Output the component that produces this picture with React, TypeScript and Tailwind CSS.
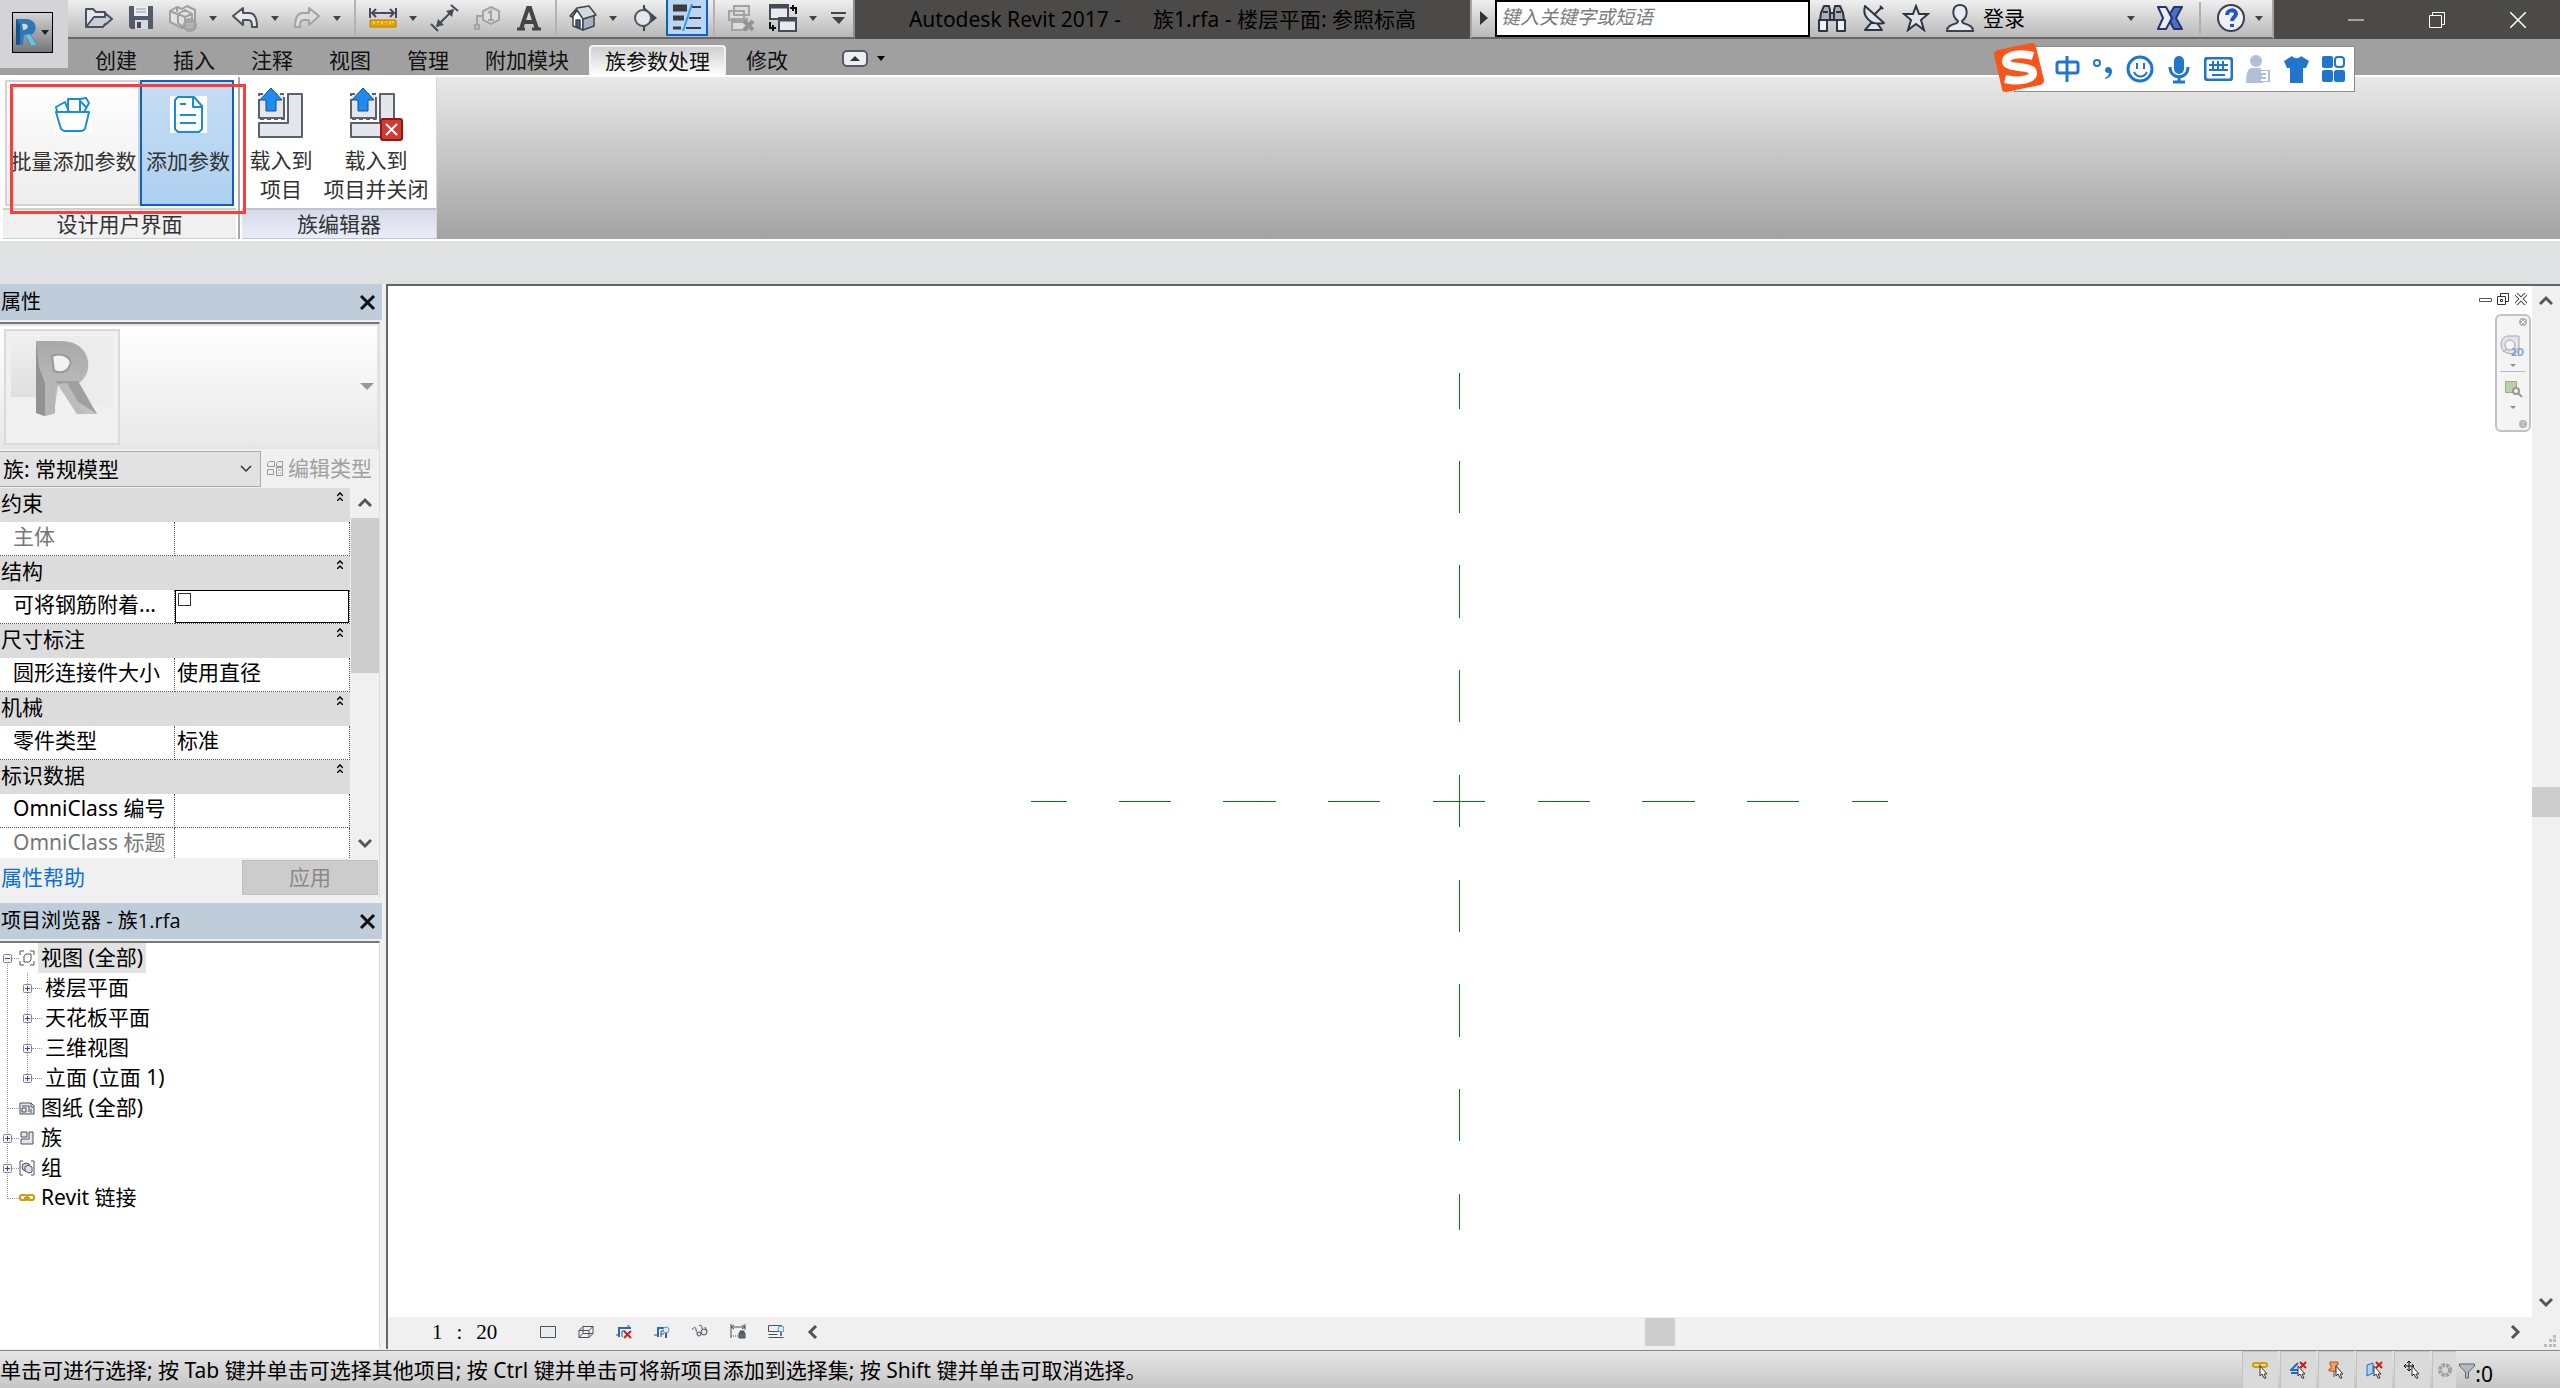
import React from 'react';

const Caret: React.FC<{ className?: string }> = ({ className = 'text-[#444]' }) => (
  <svg width="8" height="5" viewBox="0 0 8 5" className={className} fill="currentColor">
    <path d="M0 0h8L4 5z" />
  </svg>
);

const ToolButton: React.FC<{ label: string; active?: boolean; children: React.ReactNode }> = ({ label, active, children }) => (
  <button
    aria-label={label}
    className={`flex h-9 w-[42px] flex-none items-center justify-center ${active ? 'border-2 border-t-0 border-[#0a62c4] bg-[#b9d7f5]' : ''}`}
  >
    {children}
  </button>
);

const CaretButton: React.FC<{ label: string }> = ({ label }) => (
  <button aria-label={label} className="mr-[2px] flex h-9 w-[18px] flex-none items-center justify-center">
    <Caret />
  </button>
);

const ArrowShape = ({ color, fill }: { color: string; fill: string }) => (
  <svg width="28" height="24" viewBox="0 0 28 24" fill={fill} stroke={color} strokeWidth="2" strokeLinejoin="round">
    <path d="M2 10 12 2v5h6c6 0 8 5 8 14h-5c0-6-1-7-4-7h-5v5z" />
  </svg>
);

const AppMenu = () => (
  <button aria-label="应用程序菜单" className="absolute top-0 left-0 flex size-[68px] items-center justify-center bg-[#d3d4d8]">
    <span className="mt-[-3px] ml-[-3px] flex size-[41px] items-center justify-center gap-[3px] border border-black bg-linear-to-b from-[#d4d4d4] to-[#777]">
      <svg width="22" height="27" viewBox="0 0 22 27">
        <path d="M0 0h9c13 0 13 13 6 16l7 10h-8L8 15l-1 11H0z" fill="#2f77b6" />
        <path d="M0 0l4 6v19l-4 1z" fill="#16518c" />
        <path d="M6 5c7-2 8 6 1 6z" fill="#d0d5da" />
        <path d="M9 16l5-1 7 11h-6z" fill="#6cc0dd" />
      </svg>
      <Caret className="text-[#222]" />
    </span>
  </button>
);

const QuickAccess = () => (
  <div className="ml-[68px] flex h-[39px] w-[787px] flex-none items-start border-r-2 border-b-2 border-r-[#8f8f8f] border-b-[#666] bg-linear-to-b from-[#efefef] to-[#b9b9b9] pl-[10px]">
    <ToolButton label="打开">
      <svg width="30" height="22" viewBox="0 0 30 22" fill="#e3e6ec" stroke="#4a515d" strokeWidth="2" strokeLinejoin="round">
        <path d="M2 20V2h7l3 3h9v5" />
        <path d="M2 20 10 10h11V6l7 6-7 6v-1l-2 3z" fill="#c9ced8" />
      </svg>
    </ToolButton>
    <ToolButton label="保存">
      <svg width="26" height="26" viewBox="0 0 26 26">
        <path d="M1 1h24v23H3l-2-2z" fill="#535a68" />
        <path d="M6 1h14v10H6z" fill="#eceef2" />
        <path d="M8 4h10M8 7h10" stroke="#8b93a0" />
        <path d="M7 15h13v9H7z" fill="#d5d8df" />
        <path d="M9 17h4v6H9z" fill="#444b58" />
      </svg>
    </ToolButton>
    <ToolButton label="同步">
      <svg width="30" height="28" viewBox="0 0 30 28" fill="#e2e2e2" stroke="#a0a0a0" strokeWidth="2" strokeLinejoin="round">
        <path d="M2 7 9 3l5 2 5-3 8 4v12l-8 4-5 2-12-6z" />
        <path d="M10 10l7-4 7 4v9l-7 5-7-5zM10 10l7 3 7-3M17 13v11M2 7l7 3M9 3v5" />
        <circle cx="22" cy="21" r="6" fill="#a5a5a5" />
        <path d="M18 20h8M18 23h7" stroke="#c8c8c8" strokeWidth="1" />
      </svg>
    </ToolButton>
    <CaretButton label="同步选项" />
    <ToolButton label="放弃"><ArrowShape color="#4a515d" fill="#e6e9ee" /></ToolButton>
    <CaretButton label="放弃列表" />
    <ToolButton label="重做">
      <span className="-scale-x-100"><ArrowShape color="#a3a3a3" fill="#dcdcdc" /></span>
    </ToolButton>
    <CaretButton label="重做列表" />
    <span className="mx-[6px] h-9 w-[2px] bg-[#b3b3b3]" />
    <ToolButton label="测量">
      <svg width="28" height="20" viewBox="0 0 28 20">
        <path d="M1 0v10M27 0v10M3 5h22M7 1 3 5l4 4M21 1l4 4-4 4" fill="none" stroke="#454b57" strokeWidth="2" />
        <path d="M1 12h26v7H1z" fill="#e9a400" stroke="#b87d00" />
        <path d="M5 13v3M9 13v2M13 13v3M17 13v2M21 13v3M24 13v2" stroke="#fff0a8" />
      </svg>
    </ToolButton>
    <CaretButton label="测量选项" />
    <ToolButton label="对齐尺寸标注">
      <svg width="30" height="28" viewBox="0 0 30 28" fill="none" stroke="#454b57" strokeWidth="2">
        <path d="M1 20l7 7M21 1l7 6M7 22 23 6" />
        <path d="M6 23l2-8 6 6zM24 5l-8 2 6 6z" fill="#454b57" stroke="none" />
      </svg>
    </ToolButton>
    <ToolButton label="标记">
      <svg width="28" height="26" viewBox="0 0 28 26" fill="none" stroke="#a3a3a3" strokeWidth="2">
        <path d="M4 20v-9h5M2 20h4v4H2z" />
        <path d="M18 2l8 4v9l-8 4-8-4V6z" fill="#dedede" />
        <path d="M15 8l3-2v9M15 15h6" />
      </svg>
    </ToolButton>
    <ToolButton label="文字">
      <svg width="24" height="26" viewBox="0 0 24 26" fill="none" stroke="#444" strokeWidth="4">
        <path d="M4 24 11 3h2l7 21M7 17h10" />
        <path d="M0 24h8M15 24h9" strokeWidth="3" />
      </svg>
    </ToolButton>
    <span className="mx-[5px] h-9 w-[2px] bg-[#b3b3b3]" />
    <ToolButton label="三维视图">
      <svg width="28" height="26" viewBox="0 0 28 26" stroke="#3e4450" strokeWidth="1.5" strokeLinejoin="round">
        <path d="M4 11v10l10 4V12L8 5z" fill="#fafafa" />
        <path d="M14 14v11l11-4V10z" fill="#aab2bf" />
        <path d="M1 11 8 3l12-2 7 9-13 4-6-9-5 7z" fill="#d5dae1" />
        <path d="M7 15h4v8l-4-1z" fill="#555d6a" />
      </svg>
    </ToolButton>
    <CaretButton label="三维视图选项" />
    <ToolButton label="剖面">
      <svg width="26" height="26" viewBox="0 0 26 26">
        <path d="M12 0v26" stroke="#3e4450" strokeWidth="2" />
        <path d="M12 2 25 13 12 23z" fill="#3e4450" />
        <circle cx="11" cy="13" r="8" fill="#e4e7ec" stroke="#4f5663" strokeWidth="2" />
      </svg>
    </ToolButton>
    <ToolButton label="细线" active>
      <svg width="30" height="28" viewBox="0 0 30 28" stroke="#3c3c3c">
        <path d="M1 5h14" strokeWidth="7" />
        <path d="M1 15h11" strokeWidth="5" />
        <path d="M1 25h8" strokeWidth="3" />
        <path d="M20 4h9M17 15h12M14 25h15" strokeWidth="2" />
        <path d="M20 1 11 28" stroke="#3598fb" strokeWidth="2" />
      </svg>
    </ToolButton>
    <span className="mx-[5px] h-9 w-[2px] bg-[#b3b3b3]" />
    <ToolButton label="关闭隐藏窗口">
      <svg width="28" height="28" viewBox="0 0 28 28" fill="#dcdcdc" stroke="#a3a3a3" strokeWidth="2">
        <path d="M7 2h15v9H7zM2 7h15v9H2zM5 15h15v11H5zM5 18h12" />
        <path d="M17 17l9 9M26 17l-9 9" stroke="#939393" strokeWidth="4" />
      </svg>
    </ToolButton>
    <ToolButton label="切换窗口">
      <svg width="30" height="28" viewBox="0 0 30 28" fill="#e8eaf0" stroke="#444b57" strokeWidth="2">
        <path d="M2 1h18v14H2z" />
        <path d="M11 14h17v13H11z" />
        <path d="M2 3h18M11 16h17" strokeWidth="3" />
        <path d="M22 4h6v6M25 1v6M2 18v6h6M5 21v6" fill="none" stroke="#111" />
      </svg>
    </ToolButton>
    <CaretButton label="窗口列表" />
    <button aria-label="自定义快速访问工具栏" className="flex h-9 w-7 items-center justify-center">
      <svg width="15" height="12" viewBox="0 0 15 12" fill="#444">
        <path d="M0 0h15v2H0zM1 5h13l-6 7z" />
      </svg>
    </button>
  </div>
);

const InfoCenter = () => (
  <div className="flex h-[39px] w-[804px] flex-none items-start border-x-2 border-b-2 border-x-[#a5a5a5] border-b-[#666] bg-linear-to-b from-[#efefef] to-[#b9b9b9]">
    <button aria-label="展开" className="flex h-9 w-[23px] items-center justify-center">
      <svg width="8" height="14" viewBox="0 0 8 14" fill="#333"><path d="M0 0v14l8-7z" /></svg>
    </button>
    <input
      aria-label="搜索"
      placeholder="键入关键字或短语"
      className="h-[37px] w-[315px] border-2 border-black bg-white px-1 pb-1 text-[19px] italic placeholder:text-[#7d7d7d]"
    />
    <div className="flex h-9 items-center gap-[15px] pl-2">
      <button aria-label="查找">
        <svg width="28" height="27" viewBox="0 0 28 27" fill="#eef0f4" stroke="#2e3440" strokeWidth="2" strokeLinejoin="round">
          <path d="M12 8h4v7h-4zM3 8 6 1h5l1 4v10H2zM16 5l1-4h5l3 7 1 7H16z" fill="#a9b0bd" />
          <path d="M1 15h8v11H1zM19 15h8v11h-8z" />
          <path d="M5 7h5M18 7h5" />
        </svg>
      </button>
      <button aria-label="通讯中心">
        <svg width="26" height="28" viewBox="0 0 26 28" fill="#dfe3ea" stroke="#2e3440" strokeWidth="2" strokeLinejoin="round">
          <path d="M10 19 4 26h17l-5-7z" />
          <path d="M4 2C1 12 9 22 23 19z" />
          <path d="M13 11 21 3M19 2l3 3" />
        </svg>
      </button>
      <button aria-label="收藏夹">
        <svg width="28" height="28" viewBox="0 0 28 28" fill="#dfe3ea" stroke="#2e3440" strokeWidth="2">
          <path d="M14 2l3 8h9l-7 6 3 10-8-6-8 6 3-10-7-6h9z" />
        </svg>
      </button>
      <button className="flex items-center gap-2 text-[21px] leading-7 text-black">
        <svg width="30" height="28" viewBox="0 0 30 28" fill="#e8ebf0" stroke="#3a414e" strokeWidth="2">
          <path d="M2 27c0-5 4-6 10-8l1-2C6 12 7 1 15 1s9 11 2 16l1 2c6 2 10 3 10 8z" />
        </svg>
        登录
      </button>
    </div>
    <div className="ml-auto flex h-9 items-center">
      <button aria-label="登录选项" className="px-[22px]"><Caret /></button>
      <button aria-label="应用商店">
        <svg width="26" height="24" viewBox="0 0 26 24" strokeWidth="2" stroke="#26356f" strokeLinejoin="round">
          <path d="M1 1h8l6 11-6 11H1l5-11z" fill="#e8edf8" />
          <path d="M25 1h-8l-4 7 2 4-2 4 4 7h8l-6-11z" fill="#4c6fc4" />
        </svg>
      </button>
      <span className="mx-4 h-8 w-[2px] bg-[#b0b0b0]" />
      <button aria-label="帮助">
        <svg width="29" height="29" viewBox="0 0 29 29">
          <circle cx="14" cy="14" r="13" fill="#eef1f6" stroke="#3a414e" strokeWidth="2" />
          <path d="M10 11c0-6 9-6 9-1 0 3-4 3-4 7" fill="none" stroke="#2457c5" strokeWidth="4" />
          <path d="M13 20h4v3h-4z" fill="#2457c5" />
        </svg>
      </button>
      <button aria-label="帮助选项" className="px-[9px]"><Caret /></button>
    </div>
  </div>
);

const TitleBar = () => (
  <div className="flex h-[39px] flex-none bg-[#4b4a48]">
    <QuickAccess />
    <div className="flex flex-1 items-center justify-center gap-8 pb-px text-[21px] whitespace-nowrap text-black">
      <span>Autodesk Revit 2017 -</span>
      <span>族1.rfa - 楼层平面: 参照标高</span>
    </div>
    <InfoCenter />
    <div className="flex w-[286px] flex-none items-center justify-between pr-[34px] pl-[74px]">
      <button aria-label="最小化">
        <svg width="16" height="16" viewBox="0 0 16 16"><path d="M0 8h16" stroke="#fff" /></svg>
      </button>
      <button aria-label="还原">
        <svg width="16" height="16" viewBox="0 0 16 16" fill="none" stroke="#fff">
          <path d="M.5 3.500h12v12H.5zM3.500 3V.5h12v12H13" />
        </svg>
      </button>
      <button aria-label="关闭">
        <svg width="16" height="16" viewBox="0 0 16 16" stroke="#fff" strokeWidth="1.500"><path d="M0 0l16 16M16 0 0 16" /></svg>
      </button>
    </div>
  </div>
);

const tabs = ['创建', '插入', '注释', '视图', '管理', '附加模块', '族参数处理', '修改'];

const TabRow = () => (
  <nav className="flex h-9 flex-none items-end bg-[#a0a0a0] pl-[77px] text-[21px] text-[#111]">
    {tabs.map((t) =>
      t === '族参数处理' ? (
        <button key={t} className="mx-[2px] h-[30px] rounded-t border-2 border-b-0 border-[#f2f2f2] bg-linear-to-b from-[#cfcfcf] to-white px-[14px] leading-[26px]">
          {t}
        </button>
      ) : (
        <button key={t} className="h-[30px] px-[18px] leading-[28px]">{t}</button>
      )
    )}
    <button aria-label="最小化功能区" className="mb-[8px] ml-9 flex items-center gap-[9px]">
      <svg width="26" height="17" viewBox="0 0 26 17">
        <rect x="1" y="1" width="24" height="15" rx="4" fill="#eceef2" stroke="#535a68" strokeWidth="2" />
        <path d="M8 11h10l-5-5z" fill="#333" />
      </svg>
      <Caret className="text-black" />
    </button>
  </nav>
);

const FamilyIcon: React.FC<{ closing?: boolean }> = ({ closing }) => (
  <svg width={closing ? 54 : 48} height="54" viewBox={closing ? '0 0 54 54' : '0 0 48 54'} strokeLinejoin="round">
    <g fill="#e4e6eb" stroke="#5c626d" strokeWidth="2">
      <path d="M2 7h25v25H2z" strokeDasharray="4 3" />
      <path d="M2 12v19h25V12" />
      <path d={closing ? 'M31 7h14v28H31z' : 'M31 7h14v43H2V36h29z'} />
      {closing && <path d="M2 36h34v14H2z" />}
    </g>
    <path d="M14 1 25 13h-6v11H9V13H3z" fill="#1f8bf0" stroke="#0c4f9d" />
    {closing && (
      <g>
        <rect x="32" y="32" width="21" height="21" rx="2" fill="#d23a34" stroke="#98140f" strokeWidth="2" />
        <path d="M37 37l11 11M48 37 37 48" stroke="#fff" strokeWidth="2" />
      </g>
    )}
  </svg>
);

const Ribbon = () => (
  <div className="relative flex h-[166px] flex-none border-y-2 border-white bg-linear-to-b from-[#e9e9e9] to-[#a3a3a3] text-[21px] leading-[29px] text-[#333]">
    <section className="flex w-[240px] flex-none flex-col border-r-2 border-[#a8a8a8] bg-white pt-[3px]">
      <div className="flex h-[126px] pl-[5px]">
        <button className="flex w-[135px] flex-col items-center border-2 border-[#d3d3d3] bg-linear-to-b from-white to-[#ededed] pt-[14px] pl-[2px] whitespace-nowrap">
          <svg width="37" height="37" viewBox="0 0 37 37" fill="#fff" stroke="#168fd8" strokeWidth="2" strokeLinejoin="round">
            <path d="M0 0h37v37H0z" stroke="none" />
            <path d="M2 15 1 11l9-5 4 10M13 16V3h12v13M25 3l6-1 3 5-5 9M25 5l6 6" />
            <path d="M1 16h33l-4 17-3 2H9l-3-2z" />
          </svg>
          <span className="mt-[14px]">批量添加参数</span>
        </button>
        <button className="flex w-[94px] flex-col items-center border-2 border-[#0a62c4] bg-linear-to-b from-[#c6def5] to-[#aed0f0] pt-[14px] pl-[2px] whitespace-nowrap">
          <svg width="37" height="37" viewBox="0 0 37 37" fill="none" stroke="#168fd8" strokeWidth="2" strokeLinejoin="round">
            <path d="M0 0h37v37H0z" fill="#fff" stroke="none" />
            <path d="M8 1h16l8 9v23l-3 3H8l-3-3V4zM23 1v10h9M10 8h6M10 19h16M10 27h16" />
          </svg>
          <span className="mt-[14px]">添加参数</span>
        </button>
      </div>
      <h2 className="mt-[2px] mr-[2px] ml-[3px] h-[31px] border-t-2 border-b border-[#cfcfcf] bg-[#f0f0f0] text-center leading-7">设计用户界面</h2>
    </section>
    <section className="flex w-[197px] flex-none flex-col border-r border-[#d8d8d8] bg-white pt-[3px]">
      <div className="flex h-[126px] pt-[7px]">
        <button className="flex w-[82px] flex-col items-center">
          <FamilyIcon />
          <span className="mt-[5px]">载入到<br />项目</span>
        </button>
        <button className="flex w-[108px] flex-col items-center">
          <FamilyIcon closing />
          <span className="mt-[5px] whitespace-nowrap">载入到<br />项目并关闭</span>
        </button>
      </div>
      <h2 className="mt-[2px] ml-[2px] h-[31px] border-t-2 border-b border-[#bfc4d4] bg-linear-to-b from-[#d6dae8] to-[#eaedf9] text-center leading-7">族编辑器</h2>
    </section>
    {/* highlight around the add-in buttons */}
    <div className="pointer-events-none absolute top-[7px] left-[10px] h-[130px] w-[236px] border-3 border-[#ff3b3b]" />
  </div>
);

// floating input method bar
const ImeBar = () => (
  <div className="absolute top-[43px] left-[1993px] flex h-[51px] items-center">
    <div className="mt-px ml-[21px] flex h-[46px] w-[341px] items-center justify-between border border-[#8b8b8b] bg-white pr-[9px] pl-10 text-[#1f76cc]">
      <svg width="25" height="26" viewBox="0 0 25 26" fill="none" stroke="currentColor" strokeWidth="3">
        <rect x="2" y="6" width="21" height="11" rx="2" /><path d="M12 0v26" />
      </svg>
      <svg width="20" height="20" viewBox="0 0 20 20" fill="currentColor">
        <circle cx="4" cy="4" r="3" fill="none" stroke="currentColor" strokeWidth="2" />
        <path d="M12 19c3-2 4-3 4-5-3 0-4-1-4-3 0-4 7-4 7 1 0 4-2 6-6 8z" />
      </svg>
      <svg width="29" height="29" viewBox="0 0 29 29" fill="none" stroke="currentColor" strokeWidth="3">
        <circle cx="14" cy="14" r="12" /><path d="M11 8v6M18 8v6M8 17c3 6 10 6 13 0" strokeWidth="2" />
      </svg>
      <svg width="22" height="29" viewBox="0 0 22 29" fill="none" stroke="currentColor" strokeWidth="3">
        <rect x="6" y="1" width="10" height="18" rx="5" fill="currentColor" stroke="none" />
        <path d="M2 12c0 13 18 13 18 0M11 21v6M5 27h12" />
      </svg>
      <svg width="29" height="24" viewBox="0 0 29 24" fill="none" stroke="currentColor" strokeWidth="2">
        <rect x="1" y="1" width="27" height="22" rx="3" strokeWidth="3" />
        <path d="M5 8h19M5 13h19M8 18h13M9 4v9M14 4v9M19 4v9" />
      </svg>
      <svg width="25" height="28" viewBox="0 0 25 28" fill="#b3bfd8">
        <circle cx="10" cy="6" r="6" /><path d="M0 28c0-10 2-15 6-15h8l3 3v12z" />
        <path d="M13 15h11v12H13z" /><path d="M15 17h6v8h-6M16 21h5" fill="none" stroke="#fff" strokeWidth="2" />
      </svg>
      <svg width="25" height="27" viewBox="0 0 25 27" fill="currentColor">
        <path d="M8 0c2 3 7 3 9 0l8 5-3 7h-3v15H6V12H3L0 5z" />
      </svg>
      <svg width="23" height="26" viewBox="0 0 23 26" fill="currentColor">
        <rect width="11" height="12" rx="2" /><rect y="14" width="11" height="12" rx="2" /><rect x="12" y="14" width="11" height="12" rx="2" />
        <rect x="13" y="1" width="9" height="10" rx="3" fill="none" stroke="currentColor" strokeWidth="2" />
      </svg>
    </div>
    <svg width="52" height="50" viewBox="0 0 52 50" className="absolute top-0 left-0">
      <path d="M5 7 38 0c3 0 4 1 5 4l8 33c0 3-1 4-4 5l-34 7c-3 0-4-1-4-3L1 12c0-3 1-4 4-5z" fill="#f9551b" />
      <path d="M40 13c-13-4-28-1-27 6 1 7 27 3 27 11 0 7-15 9-28 6" fill="none" stroke="#fff" strokeWidth="8" />
    </svg>
  </div>
);

const PanelHeader: React.FC<{ title: string }> = ({ title }) => (
  <header className="flex h-9 flex-none items-center justify-between bg-[#bfccda] pr-[6px] pl-[1px] text-black">
    <h2 className="font-['Open_Sans','Noto_Sans_CJK_SC',sans-serif] text-[20px]">{title}</h2>
    <button aria-label="关闭面板">
      <svg width="16" height="15" viewBox="0 0 16 15" stroke="#111" strokeWidth="3"><path d="M1 1l13 13M14 1 1 14" /></svg>
    </button>
  </header>
);

type Row = { name: string; value?: string; muted?: boolean; check?: boolean };

const groups: { title: string; rows: Row[] }[] = [
  { title: '约束', rows: [{ name: '主体', muted: true }] },
  { title: '结构', rows: [{ name: '可将钢筋附着...', check: true }] },
  { title: '尺寸标注', rows: [{ name: '圆形连接件大小', value: '使用直径' }] },
  { title: '机械', rows: [{ name: '零件类型', value: '标准' }] },
  { title: '标识数据', rows: [{ name: 'OmniClass 编号' }, { name: 'OmniClass 标题', muted: true }] },
];

const Chevron: React.FC<{ d: string }> = ({ d }) => (
  <svg width="14" height="14" viewBox="0 0 14 14" fill="none" stroke="#555" strokeWidth="3"><path d={d} /></svg>
);
const UP = 'M1 10l6-6 6 6';
const DOWN = 'M1 4l6 6 6-6';
const LEFT = 'M10 1 4 7l6 6';
const RIGHT = 'M4 1l6 6-6 6';

const PropertyGrid = () => (
  <div className="flex h-[370px] flex-none overflow-hidden">
    <div className="w-[351px] flex-none overflow-hidden">
      <table className="w-[350px] table-fixed border-separate border-spacing-0 whitespace-nowrap text-black">
        <colgroup><col className="w-[175px]" /><col /></colgroup>
        {groups.map((g) => (
          <tbody key={g.title}>
            <tr className="h-[34px] bg-[#dcdcdc]">
              <th colSpan={2} className="p-0 text-left font-normal">
                <div className="flex h-[34px] items-start justify-between pr-[7px] pl-[1px]">
                  <span className="leading-[30px]">{g.title}</span>
                  <svg width="6" height="9" viewBox="0 0 6 9" className="mt-1" fill="none" stroke="#000" strokeWidth="1.500"><path d="M0 4l3-3 3 3M0 9l3-3 3 3" /></svg>
                </div>
              </th>
            </tr>
            {g.rows.map((r) => (
              <tr key={r.name} className="h-[34px] bg-white align-top">
                <td className={`border-r border-b border-dotted border-[#555] p-0 pl-[13px] leading-7 ${r.muted ? 'text-[#777]' : ''}`}>
                  {r.name}
                </td>
                <td className="border-r border-b border-dotted border-[#555] p-0 leading-7">
                  {r.check ? (
                    <div className="h-[33px] border border-black p-[2px]">
                      <input type="checkbox" aria-label={r.name} className="block size-[13px] appearance-none border border-[#333] bg-white" />
                    </div>
                  ) : (
                    <span className="pl-[2px]">{r.value}</span>
                  )}
                </td>
              </tr>
            ))}
          </tbody>
        ))}
      </table>
    </div>
    <div className="flex w-7 flex-col items-center bg-[#f0f0f0]">
      <div className="flex h-[30px] items-center"><Chevron d={UP} /></div>
      <div className="h-[155px] w-full bg-[#cdcdcd]" />
      <div className="mt-auto flex h-[30px] items-center"><Chevron d={DOWN} /></div>
    </div>
  </div>
);

const Properties = () => (
  <section>
    <PanelHeader title="属性" />
    <div className="mt-[2px] mr-[2px] border-t-2 border-r border-t-[#777] border-r-[#ddd] pb-[2px]">
      <button aria-label="类型选择器" className="mb-px flex h-[125px] w-[379px] items-center justify-between border-2 border-l-0 border-[#e4e4e4] bg-linear-to-b from-white to-[#e8e8e8] pr-[3px] pl-1">
        <svg width="116" height="116" viewBox="0 0 116 116">
          <defs>
            <linearGradient id="thumb" x1="0" y1="0" x2="0" y2="1"><stop offset="0" stopColor="#a9a9a9" /><stop offset="1" stopColor="#c4c4c4" /></linearGradient>
            <linearGradient id="wall" x1="0" y1="0" x2="0" y2="1"><stop offset="0" stopColor="#f0f0f0" /><stop offset="1" stopColor="#dfdfdf" /></linearGradient>
          </defs>
          <path d="M1 1h114v114H1z" fill="#f0f0f0" stroke="#dadada" strokeWidth="2" />
          <path d="M7 7h30v61H7z" fill="url(#wall)" />
          <path d="M37 7h72v73L60 66l-23 2z" fill="#ececec" />
          <path d="M32 12h25c32 0 34 35 16 43l20 30H73L54 56l-4 29-10 2-8-3z" fill="url(#thumb)" />
          <path d="M32 13v71l9 3V54L35 38z" fill="#929292" />
          <path d="M41 54l10-3v33l-10 3z" fill="#b6b6b6" />
          <path d="M51 52h23l19 33-20-13z" fill="#a0a0a0" />
          <path d="M54 55l9-1 18 31H73z" fill="#bcbcbc" />
          <path d="M48 27c14-5 22 5 17 11-3 6-10 6-15 4z" fill="#f2f2f2" stroke="#999" strokeWidth="2" />
        </svg>
        <svg width="14" height="7" viewBox="0 0 14 7" fill="#999"><path d="M0 0h14L7 7z" /></svg>
      </button>
      <div className="flex h-[38px] items-center">
        <div className="relative flex-none">
          <select aria-label="族类型" className="block h-9 w-[261px] appearance-none border border-l-0 border-[#aaa] bg-[#e2e2e2] pl-[3px] text-black">
            <option>族: 常规模型</option>
          </select>
          <svg width="12" height="8" viewBox="0 0 12 8" className="pointer-events-none absolute top-[14px] right-[9px]" fill="none" stroke="#333" strokeWidth="1.500"><path d="M1 1l5 5 5-5" /></svg>
        </div>
        <button className="ml-[6px] flex items-center gap-[4px] pb-[2px] whitespace-nowrap text-[#a0a0a0]">
          <svg width="17" height="17" viewBox="0 0 17 17" fill="none" stroke="#999">
            <path d="M.5 3.500l2-2h5v5h-7zM9.500 3.500l2-2h4v5h-6zM.5 9.500h6v5h-6z" />
            <path d="M9.500 7.500h6v8h-6zM11 10h3M11 13h1M13 13h1" />
          </svg>
          编辑类型
        </button>
      </div>
      <PropertyGrid />
      <div className="flex h-[38px] items-center justify-between pr-px pl-[1px]">
        <a href="#help" className="text-[#0a6fd8]">属性帮助</a>
        <button disabled className="h-[35px] w-[136px] border border-[#bfbfbf] bg-[#cccccc] text-[#888]">应用</button>
      </div>
    </div>
  </section>
);

const Expander: React.FC<{ open?: boolean }> = ({ open }) => (
  <svg width="9" height="9" viewBox="0 0 9 9" className="relative flex-none">
    <rect x=".5" y=".5" width="8" height="8" rx="1" fill="#f4f4f4" stroke="#858585" />
    <path d={open ? 'M2 4.500h5' : 'M2 4.500h5M4.500 2v5'} stroke="#2d4a9e" />
  </svg>
);

const Icon16: React.FC<{ children: React.ReactNode }> = ({ children }) => (
  <svg width="16" height="16" viewBox="0 0 16 16" className="flex-none" fill="none" stroke="#4a515d">{children}</svg>
);

const topItem = 'relative flex h-[30px] items-center';
const dots = 'h-px border-t border-dotted border-[#999]';

const Branch: React.FC<{ mark?: React.ReactNode; icon: React.ReactNode; label: string; selected?: boolean }> = ({ mark, icon, label, selected }) => (
  <div className={topItem}>
    <span className="flex w-4 flex-none items-center">
      {mark ? <>{mark}<span className={`${dots} flex-1`} /></> : <span className={`${dots} ml-1 flex-1`} />}
    </span>
    {icon}
    <span className={`ml-[3px] h-[30px] px-[3px] leading-7 ${selected ? 'bg-[#e2e2e2]' : ''}`}>{label}</span>
  </div>
);

const ProjectBrowser = () => (
  <section className="flex min-h-0 flex-1 flex-col">
    <PanelHeader title="项目浏览器 - 族1.rfa" />
    <div className="mt-[2px] mr-[2px] flex-1 border-t-2 border-r border-t-[#777] border-r-[#ddd] bg-white">
      <div className="relative pl-[3px] whitespace-nowrap text-black">
        <span className="absolute top-4 left-[7px] h-[240px] border-l border-dotted border-[#999]" />
        <Branch
          selected
          label="视图 (全部)"
          mark={<Expander open />}
          icon={<Icon16><path d="M1 5V1h4M11 1h4v4M15 11v4h-4M5 15H1v-4M5 6l2-2h5v6l-2 2H5z" /></Icon16>}
        />
        <div className="relative pl-5">
          <span className="absolute top-0 left-6 h-[105px] border-l border-dotted border-[#999]" />
          {['楼层平面', '天花板平面', '三维视图', '立面 (立面 1)'].map((v) => (
            <div key={v} className={topItem}>
              <Expander />
              <span className={`${dots} w-[10px]`} />
              <span className="h-[30px] pl-[3px] leading-7">{v}</span>
            </div>
          ))}
        </div>
        <Branch label="图纸 (全部)" icon={<Icon16><path d="M1 3h11l3 3v8H1zM12 3v4h3" fill="#e4e6ea" /><path d="M3 6h7v6M3 8h4v4H3zM12 9v4" /></Icon16>} />
        <Branch label="族" mark={<Expander />} icon={<Icon16><path d="M2 2h6v5H2zM10 2h4v12H2V9h8z" fill="#e4e6ea" /></Icon16>} />
        <Branch label="组" mark={<Expander />} icon={<Icon16><path d="M4 1H1v14h3M12 1h3v14h-3" /><circle cx="7" cy="7" r="4" fill="#c9ced8" /><path d="M6 7l3-2 4 2v5l-3 1-4-2z" fill="#dde1e8" /></Icon16>} />
        <Branch label="Revit 链接" icon={<Icon16><g stroke="#d69a00" strokeWidth="2"><rect x="1" y="5" width="7" height="5" rx="2" /><rect x="8" y="5" width="7" height="5" rx="2" /><path d="M5 8h6" /></g></Icon16>} />
      </div>
    </div>
  </section>
);

const ReferencePlanes = () => (
  <svg width="858" height="858" viewBox="0 0 858 858" className="flex-none" stroke="#007f0e" strokeWidth="1" shapeRendering="crispEdges">
    <path d="M0 428.500h36M88 428.500h52M192 428.500h53M297 428.500h52M402 428.500h52M507 428.500h52M611 428.500h53M716 428.500h52M821 428.500h36" />
    <path d="M428.500 0v36M428.500 88v52M428.500 192v53M428.500 297v52M428.500 402v52M428.500 507v52M428.500 611v53M428.500 716v52M428.500 821v36" />
  </svg>
);

const NavigationBar = () => (
  <div className="absolute top-[28px] right-[1px] flex h-[118px] w-9 flex-col items-center rounded-md border-2 border-[#c2c2c2] bg-[#f4f4f4]">
    <button aria-label="关闭导航栏" className="mt-[2px] mr-[2px] self-end">
      <svg width="8" height="8" viewBox="0 0 8 8"><circle cx="4" cy="4" r="4" fill="#b3b3b3" /><path d="M2 2l4 4M6 2 2 6" stroke="#fff" /></svg>
    </button>
    <button aria-label="二维控制盘" className="mt-2">
      <svg width="28" height="26" viewBox="0 0 28 26" fill="#e3e3e8" stroke="#a5a5ae">
        <path d="M9 2h11v14c-3 6-18 5-18-5 0-5 3-9 7-9z" /><circle cx="11" cy="11" r="5" fill="#f4f4f4" /><path d="M4 18l4-3M14 15l3 3" />
        <text x="12" y="22" fontSize="10" fontWeight="700" fill="#7ba2cc" stroke="none">2D</text>
      </svg>
    </button>
    <svg width="6" height="3" viewBox="0 0 6 3" fill="#8d8d8d" className="mt-1"><path d="M0 0h6L3 3z" /></svg>
    <span className="mt-1 h-px w-[26px] bg-[#bbb]" />
    <button aria-label="区域放大" className="mt-2 ml-[2px]">
      <svg width="18" height="18" viewBox="0 0 18 18">
        <path d="M.5 1.500h11v11H.5z" fill="#b8d1ab" stroke="#92b083" /><circle cx="11" cy="11" r="3" fill="#f4f4f4" stroke="#999" strokeWidth="2" /><path d="M13 13l4 4" stroke="#999" strokeWidth="2" />
      </svg>
    </button>
    <svg width="6" height="3" viewBox="0 0 6 3" fill="#8d8d8d" className="mt-2"><path d="M0 0h6L3 3z" /></svg>
    <svg width="8" height="8" viewBox="0 0 8 8" className="mt-auto mr-[2px] mb-[2px] self-end"><circle cx="4" cy="4" r="3" fill="#ddd" stroke="#b3b3b3" strokeWidth="2" /><path d="M2 4h4" stroke="#999" /></svg>
  </div>
);

const viewTools: { label: string; art: React.ReactNode }[] = [
  { label: '详细程度', art: <path d="M.5 2.500h15v11H.5z" fill="#e9ebf0" /> },
  { label: '视觉样式', art: <path d="M1 6.500h10v7H1zM1 6.500l4-4h10l-4 4M15 2.500v7l-4 4M5 2.500v7h10M5 9.500l-4 4" /> },
  { label: '裁剪视图', art: <><path d="M3 13V4h12" stroke="#1c6fc4" strokeWidth="2" /><path d="M6 13V7h3M0 11h3M11 2h3" /><path d="M8 7l7 7M15 7l-7 7" stroke="#c22" strokeWidth="2" /></> },
  { label: '显示裁剪区域', art: <><path d="M4 13V4h10" stroke="#1c6fc4" strokeWidth="2" /><path d="M0 11h3M7 13V7h3M7 10h3" /><circle cx="12" cy="6" r="3" fill="#d9ebfa" stroke="#4f94d6" /><path d="M12 9v5" stroke="#555" strokeWidth="2" /></> },
  { label: '临时隐藏', art: <><path d="M0 6c2-4 4-3 4 0 0 2 2 4 3 4M7 2c2-2 3 0 3 3M13 3l2 4" /><circle cx="7" cy="10" r="2" fill="#dfe3ea" /><circle cx="12" cy="8" r="3" fill="#dfe3ea" /></> },
  { label: '锁定方向', art: <><path d="M1 0v14M15 0v6M1 3h14M4 1 1 3l3 2M12 1l3 2-3 2" /><path d="M1 12h8" strokeDasharray="1 1" /><path d="M9 9h6v5H9zM10 9V7h4v2" fill="#666" /></> },
  { label: '预览可见性', art: <><path d="M.5 1.500h13v6H.5zM.5 10.500h9M.5 13.500h15" /><circle cx="13" cy="5" r="3" fill="#d9ebfa" stroke="#4f94d6" /><path d="M13 8v4" stroke="#777" strokeWidth="2" /></> },
];

const Canvas = () => (
  <main className="flex min-w-0 flex-1 flex-col border-t-2 border-l-2 border-[#666] bg-white">
    <div className="flex min-h-0 flex-1">
      <div className="relative flex min-w-0 flex-1 items-center justify-center overflow-hidden">
        <ReferencePlanes />
        <div className="absolute top-[7px] right-[5px] flex items-center gap-[5px]">
          <svg width="13" height="12" viewBox="0 0 13 12" fill="none" stroke="#555"><path d="M.5 5.500h12v3H.5z" /></svg>
          <svg width="13" height="12" viewBox="0 0 13 12" fill="#fff" stroke="#334"><path d="M3.500.5h8v8h-8z" /><path d="M.5 3.500h8v8h-8zM3.500 6.500h2v2h-2z" /></svg>
          <svg width="12" height="12" viewBox="0 0 12 12" fill="none"><path d="M1 1l10 10M11 1 1 11" stroke="#444" strokeWidth="4" /><path d="M1 1l10 10M11 1 1 11" stroke="#fff" strokeWidth="2" /></svg>
        </div>
        <NavigationBar />
      </div>
      <div className="flex w-7 flex-none flex-col items-center justify-between bg-[#f0f0f0] py-2">
        <Chevron d={UP} />
        <div className="h-[30px] w-full bg-[#cdcdcd]" />
        <Chevron d={DOWN} />
      </div>
    </div>
    <div className="flex h-8 flex-none items-center bg-[#f0f0f0] pb-[2px] pl-[44px]">
      <button className="flex w-[108px] gap-[14px] font-['Liberation_Serif','Noto_Sans_CJK_SC',serif] text-[21px] text-black">
        <span>1</span><span>:</span><span>20</span>
      </button>
      <div className="flex gap-[22px]">
        {viewTools.map((t) => (
          <button key={t.label} aria-label={t.label}>
            <svg width="16" height="16" viewBox="0 0 16 16" fill="none" stroke="#4a515d">{t.art}</svg>
          </button>
        ))}
        <button aria-label="向左滚动"><Chevron d={LEFT} /></button>
      </div>
      <div className="flex flex-1 items-center justify-center pr-2">
        <div className="h-7 w-[30px] bg-[#cdcdcd]" />
      </div>
      <button aria-label="向右滚动" className="mr-[22px]"><Chevron d={RIGHT} /></button>
      <svg width="12" height="12" viewBox="0 0 12 12" fill="#bbb" className="mr-1 self-end"><path d="M9 0h3v3H9zM5 4h3v3H5zM9 4h3v3H9zM0 9h3v3H0zM5 9h3v3H5zM9 9h3v3H9z" /></svg>
    </div>
  </main>
);

const Cursor = () => <path d="M8 5v10l2-2 2 4h2l-2-4h3z" fill="#fff" stroke="#333" />;
const RedX = () => <path d="M10 1l6 6M16 1l-6 6" stroke="#d01818" strokeWidth="2" />;

const selectTools: { label: string; art: React.ReactNode }[] = [
  { label: '选择链接', art: <g stroke="#d69a00" strokeWidth="2"><rect x="1" y="2" width="7" height="4" rx="2" /><rect x="8" y="2" width="7" height="4" rx="2" /></g> },
  { label: '选择基线图元', art: <><path d="M8 2 1 9h9M1 12h10" stroke="#1c6fc4" strokeWidth="2" /><RedX /></> },
  { label: '选择锁定图元', art: <><path d="M2 1h8v3H8v4h3v2H1V8h2V4H2z" fill="#f3a45c" stroke="#b8501a" /><path d="M6 10v6" stroke="#555" /></> },
  { label: '按面选择图元', art: <><path d="M1 4l6-2v10l-6 3z" fill="#a9d3ef" stroke="#1c6fc4" /><RedX /></> },
  { label: '选择时拖曳图元', art: <path d="M5 0v10M0 5h10M3 2l2-2 2 2M3 8l2 2 2-2M2 3 0 5l2 2M8 3l2 2-2 2" stroke="#111" /> },
];

const StatusBar = () => (
  <footer className="mt-px flex h-[38px] flex-none items-center border-t border-[#888] bg-linear-to-b from-[#e6e6e6] to-[#c6c6c6] whitespace-nowrap text-black">
    <p className="flex-1">单击可进行选择; 按 Tab 键并单击可选择其他项目; 按 Ctrl 键并单击可将新项目添加到选择集; 按 Shift 键并单击可取消选择。</p>
    <div className="flex h-full gap-[2px]">
      {selectTools.map((t) => (
        <button key={t.label} aria-label={t.label} className="flex w-9 items-center justify-center border-t border-l border-[#c2c2c2] bg-[#dadada]">
          <svg width="17" height="18" viewBox="0 0 17 18" fill="none">{t.art}<Cursor /></svg>
        </button>
      ))}
      <button aria-label="后台进程" className="flex w-6 items-center justify-center border-t border-l border-[#c2c2c2] bg-[#dadada]">
        <svg width="14" height="14" viewBox="0 0 14 14" fill="none" stroke="#a0a0a0" strokeWidth="4"><circle cx="7" cy="7" r="5" strokeDasharray="3 1" /></svg>
      </button>
    </div>
    <button className="mr-[67px] flex h-full items-end pl-[3px]">
      <svg width="16" height="16" viewBox="0 0 16 16" fill="#b4bac4" stroke="#5a616d" className="mb-[9px]"><path d="M.5 1h15v2l-6 6v6h-3V9l-6-6z" /></svg>
      <span>:0</span>
    </button>
  </footer>
);

export default function App() {
  return (
    <div className="relative flex h-screen flex-col overflow-hidden bg-[#f0f0f0] font-['Noto_Sans','Noto_Sans_CJK_SC',sans-serif] text-[21px] leading-7">
      <TitleBar />
      <TabRow />
      <AppMenu />
      <Ribbon />
      <div className="h-[43px] flex-none bg-[#e0e1e3]" />
      <div className="flex min-h-0 flex-1">
        <aside className="flex w-[386px] flex-none flex-col pr-1">
          <Properties />
          <div className="h-[5px] flex-none" />
          <ProjectBrowser />
        </aside>
        <Canvas />
      </div>
      <StatusBar />
      <ImeBar />
    </div>
  );
}
